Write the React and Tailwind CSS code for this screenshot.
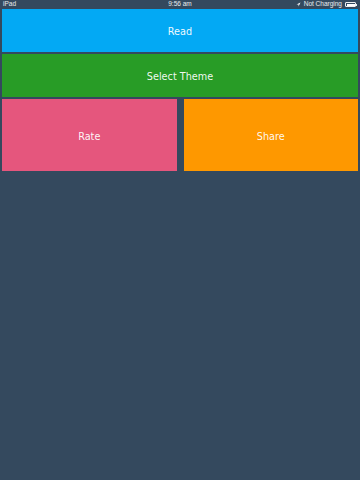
import React from 'react';

const font = { fontFamily: '"DejaVu Sans", Verdana, sans-serif' };

const StatusBar = () => (
  <div className="relative flex items-center justify-between h-[9px] px-[3px] text-[6.5px] leading-none text-white/90" style={{ fontFamily: '"Liberation Sans", Arial, sans-serif' }}>
    <span>iPad</span>
    <span className="absolute left-1/2 -translate-x-1/2">9:56 am</span>
    <div className="flex items-center gap-[3px]">
      <svg width="5" height="5" viewBox="0 0 10 10">
        <path d="M9 1 L1 5 L5 5 L5 9 Z" fill="white" />
      </svg>
      <span>Not Charging</span>
      <div className="flex items-center">
        <div className="w-[11px] h-[5px] border border-white/90 rounded-[1px] p-[0.5px]">
          <div className="w-full h-full bg-white" />
        </div>
        <div className="w-[1px] h-[2px] bg-white/90" />
      </div>
    </div>
  </div>
);

const Tile = ({ label, className }) => (
  <button className={`flex items-center justify-center pt-[4px] text-white/95 text-[9.7px] ${className}`} style={font}>
    {label}
  </button>
);

export default function App() {
  return (
    <div className="w-[360px] h-[480px] bg-[#34495e] overflow-hidden">
      <StatusBar />
      <div className="flex flex-col gap-[2px] px-[2px]">
        <Tile label="Read" className="h-[43px] bg-[#03a9f4]" />
        <Tile label="Select Theme" className="h-[43px] bg-[#289c26]" />
        <div className="flex gap-[7px]">
          <Tile label="Rate" className="flex-1 h-[72px] bg-[#e5567d]" />
          <Tile label="Share" className="flex-1 h-[72px] bg-[#fe9800]" />
        </div>
      </div>
    </div>
  );
}
